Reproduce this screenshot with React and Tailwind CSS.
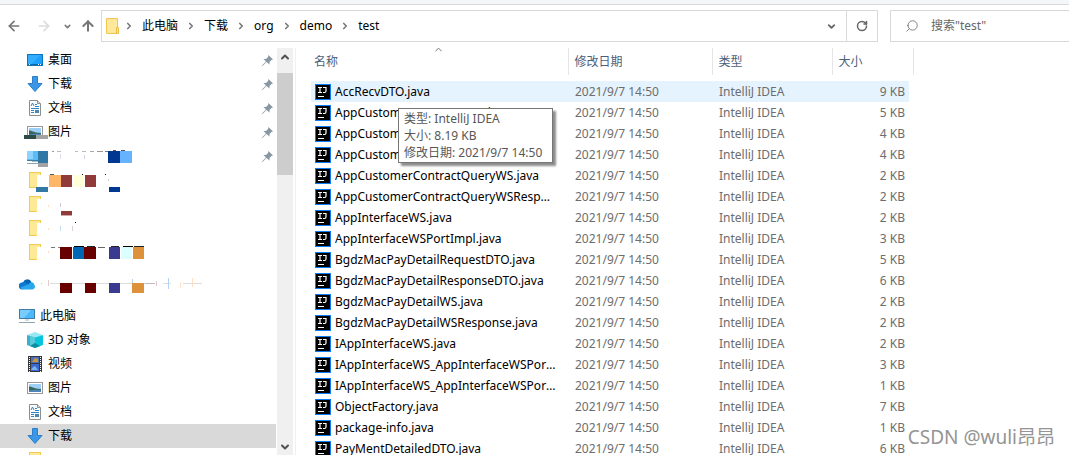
import { ArrowLeft, ArrowRight, ArrowUp, ChevronDown, ChevronRight, ChevronUp, RotateCw, Search } from 'lucide-react';

const files = [
  ['AccRecvDTO.java', '9 KB'],
  ['AppCustomerContractDTO.java', '5 KB'],
  ['AppCustomerContractQueryRequestDTO.java', '4 KB'],
  ['AppCustomerContractQueryResponseDTO.java', '4 KB'],
  ['AppCustomerContractQueryWS.java', '2 KB'],
  ['AppCustomerContractQueryWSResponse.java', '2 KB'],
  ['AppInterfaceWS.java', '2 KB'],
  ['AppInterfaceWSPortImpl.java', '3 KB'],
  ['BgdzMacPayDetailRequestDTO.java', '5 KB'],
  ['BgdzMacPayDetailResponseDTO.java', '6 KB'],
  ['BgdzMacPayDetailWS.java', '2 KB'],
  ['BgdzMacPayDetailWSResponse.java', '2 KB'],
  ['IAppInterfaceWS.java', '2 KB'],
  ['IAppInterfaceWS_AppInterfaceWSPort_Client.java', '3 KB'],
  ['IAppInterfaceWS_AppInterfaceWSPort_Server.java', '1 KB'],
  ['ObjectFactory.java', '7 KB'],
  ['package-info.java', '1 KB'],
  ['PayMentDetailedDTO.java', '6 KB'],
];

const crumbs = ['此电脑', '下载', 'org', 'demo', 'test'];

function Svg({ children }) {
  return (
    <svg className="size-4 shrink-0" viewBox="0 0 16 16" aria-hidden="true">
      {children}
    </svg>
  );
}

function DesktopIcon() {
  return (
    <Svg>
      <rect x="0.5" y="2.5" width="15" height="11" fill="#1ba1fb" stroke="#0b75bd" />
      <path d="M1 3h12L4 13H1z" fill="#35adff" />
      <path d="M1 12.5h14" stroke="#0b67a8" />
      <path d="M2 12.5h1M11 12.5h1M13 12.5h1" stroke="#fff" />
    </Svg>
  );
}

function DownloadIcon() {
  return (
    <Svg>
      <path d="M5.500.5h5v7h4.500L8 15.500 1 7.500h4.500z" fill="#3a96e6" stroke="#2b7fc9" />
    </Svg>
  );
}

function DocumentIcon() {
  return (
    <Svg>
      <path d="M2.500.5h8l3 3v12h-11z" fill="#fbfbfb" stroke="#8b8f92" />
      <path d="M10.500.5v3h3" fill="#ddd" stroke="#8b8f92" />
      <path d="M4 6l1.500-3L7 6M8 4.500h2M8 6.500h4M4 8.500h8M4 10.500h3M4 12.500h3" fill="none" stroke="#2f86c8" />
      <path d="M8 10h4v3H8z" fill="#4b89a5" />
    </Svg>
  );
}

function PictureIcon() {
  return (
    <Svg>
      <rect x="0.5" y="2.5" width="15" height="11" fill="#fff" stroke="#96999b" />
      <path d="M2 4h12v8H2z" fill="#9ed0f7" />
      <path d="M2 6.500c3 0 4 2 12 2.500V12H2z" fill="#37665c" />
      <path d="M2 10.500c4-1 8-1 12-.5v2H2z" fill="#4d87b8" />
    </Svg>
  );
}

function ComputerIcon() {
  return (
    <Svg>
      <rect x="0.5" y="1.500" width="15" height="9" fill="#4db8fa" stroke="#3d7ea8" />
      <path d="M1 2h11l-7 8H1z" fill="#7accff" />
      <path d="M6 12h4" stroke="#a9bac5" />
      <path d="M0 14.500h16" stroke="#8fa5b2" />
    </Svg>
  );
}

function CubeIcon() {
  return (
    <Svg>
      <path d="M0 3l8-3 8 3-8 3z" fill="#9be8f2" />
      <path d="M0 3l8 2.500V16l-8-3z" fill="#35b2c9" />
      <path d="M16 3L8 5.500V16l8-3z" fill="#08c5dd" />
      <path d="M3 4l5 1.500V11l-5 3z" fill="#5ac9d9" />
      <path d="M3 14l5-3 5 3-5 2z" fill="#0f8da0" />
    </Svg>
  );
}

function VideoIcon() {
  return (
    <Svg>
      <path d="M1 0h14v16H1z" fill="#35383c" />
      <path d="M4 1h8v6H4z" fill="#4f6fc0" />
      <path d="M4 8h8v7H4z" fill="#3a67d0" />
      <path d="M5 6l3-4 3 1v3z" fill="#c99a2e" />
      <path d="M5 12l3-2 3 4H4z" fill="#7db0ee" />
      <path d="M2.500 1v15M13.500 1v15" stroke="#fff" strokeDasharray="1 1" />
    </Svg>
  );
}

function CloudIcon() {
  return (
    <Svg>
      <path d="M4 7a4.500 4.500 0 018.500-1L10 10z" fill="#0364b8" />
      <path d="M3.500 13.500A3.500 3.500 0 013 6.500c2-1 4 0 5 1l3 3z" fill="#0f78d4" />
      <path d="M10 8c1-2.500 5-2 5 .5 1.500.8 1.500 4.500-1.500 5h-9c-2 0-3-1-3-2z" fill="#28a8ea" />
    </Svg>
  );
}

function IdeaIcon() {
  return (
    <Svg>
      <rect x="0.5" y="0.5" width="15" height="15" fill="#000" stroke="#0b7cf5" />
      <path d="M3 3.500h4M5 3v6M3 8.500h4M8 3.500h3V7q0 1.500-1.500 1.500H8" fill="none" stroke="#fff" strokeWidth="1.2" />
      <path d="M3 12.500h6" stroke="#fff" />
    </Svg>
  );
}

function PinIcon() {
  return (
    <svg className="size-[11px] shrink-0" viewBox="0 0 11 11" aria-hidden="true">
      <path d="M6.500 0L11 4.500 9.500 5 7.500 7v2.500L4.500 7 .5 11 0 10.500l4-4L1.500 4H4l2-2z" fill="#8a96a0" />
    </svg>
  );
}

// Hidden entries: each block is [x, y, width, height, colour] inside a 24px row
const folder = [
  [29, 4, 12, 16, '#efcb55'],
  [30, 5, 10, 14, '#ffe896'],
  [37, 7, 6, 13, '#ffffff'],
];

const hidden = {
  network: [
    [27, 7, 11, 9, '#5bbcf5'], [27, 7, 6, 8, '#8fd4ff'], [27, 16, 11, 1, '#3d7ea8'], [32, 17, 6, 1, '#a9bac5'], [27, 19, 11, 1, '#8fa5b2'],
    [38, 7, 10, 12, '#3178a4'], [38, 19, 10, 4, '#a3a3a3'],
    [52, 7, 2, 1, '#999'], [57, 7, 4, 1, '#bbb'], [75, 7, 3, 1, '#bbb'], [82, 7, 4, 1, '#bbb'], [90, 7, 4, 1, '#aaa'], [97, 7, 6, 1, '#999'], [105, 7, 4, 1, '#777'],
    [60, 10, 1, 5, '#e3dcee'], [84, 11, 1, 4, '#d5d2ec'],
    [108, 7, 12, 12, '#003891'], [120, 7, 12, 12, '#65b3ff'], [113, 6, 3, 1, '#555'], [121, 6, 4, 1, '#555'],
  ],
  first: [
    ...folder,
    [36, 19, 12, 5, '#3178a4'], [49, 7, 12, 12, '#ffb669'], [61, 7, 11, 12, '#913a3a'], [73, 7, 11, 12, '#ffffda'], [85, 7, 11, 12, '#913a3a'],
    [50, 6, 4, 1, '#555'], [82, 6, 1, 1, '#203'], [105, 6, 1, 1, '#203'], [108, 11, 1, 2, '#ccc'], [109, 19, 11, 5, '#003891'],
  ],
  second: [...folder, [48, 13, 1, 2, '#ffdcc0'], [60, 11, 1, 4, '#c9c9d5'], [61, 19, 11, 5, '#913a3a'], [61, 23, 11, 1, '#d0a8a8']],
  third: [...folder, [48, 12, 1, 2, '#ffdcc0'], [75, 6, 1, 1, '#000'], [60, 10, 1, 5, '#c7dcf5'], [72, 10, 1, 5, '#ddd0dd']],
  fourth: [
    ...folder,
    [48, 11, 1, 2, '#ffdcc0'], [51, 7, 4, 1, '#777'], [58, 7, 7, 1, '#888'], [74, 6, 10, 1, '#000'], [87, 6, 8, 1, '#222'], [98, 7, 7, 1, '#666'], [111, 6, 8, 1, '#222'], [123, 6, 10, 1, '#000'], [134, 6, 10, 1, '#222'],
    [60, 7, 12, 12, '#690000'], [73, 7, 11, 12, '#0067b6'], [84, 7, 12, 12, '#690000'], [109, 7, 11, 12, '#3a3a91'], [121, 7, 11, 12, '#dbffff'], [133, 7, 11, 12, '#dc913a'],
  ],
  cloud: [
    [41, 11, 1, 1, '#ccc'], [48, 8, 1, 6, '#e5ccd0'], [50, 11, 95, 1, '#ddd'], [145, 11, 10, 1, '#bbb'], [156, 9, 1, 5, '#e3c8d4'], [163, 11, 8, 1, '#ddd'], [168, 6, 1, 11, '#b6d2f0'], [180, 10, 1, 6, '#ffe2c8'], [183, 11, 19, 1, '#ddd'], [192, 6, 1, 9, '#ffdfc4'],
    [132, 7, 1, 5, '#b6d2f0'],
    [60, 11, 12, 10, '#690000'], [85, 11, 11, 10, '#690000'], [109, 11, 11, 10, '#3a3a91'], [132, 11, 12, 10, '#dc913a'],
  ],
};

function Blocks({ blocks }) {
  return (
    <svg className="h-6 w-52 shrink-0" viewBox="0 0 208 24" shapeRendering="crispEdges" aria-hidden="true">
      {blocks.map(([x, y, width, height, fill], i) => (
        <rect key={i} x={x} y={y} width={width} height={height} fill={fill} />
      ))}
    </svg>
  );
}

function NavItem({ icon, label, pinned, root, active }) {
  return (
    <li>
      <a
        href="#"
        className={`flex h-6 items-center gap-[5px] pr-[3px] ${root ? 'pl-[19px]' : 'pl-[27px]'} ${active ? 'bg-[#d9d9d9]' : ''}`}
      >
        {icon}
        <span className="grow">{label}</span>
        {pinned && <PinIcon />}
      </a>
    </li>
  );
}

function Sidebar() {
  return (
    <nav className="w-[276px] shrink-0 overflow-hidden">
      <ul>
        <NavItem icon={<DesktopIcon />} label="桌面" pinned />
        <NavItem icon={<DownloadIcon />} label="下载" pinned />
        <NavItem icon={<DocumentIcon />} label="文档" pinned />
        <li className="relative">
          <a href="#" className="flex h-6 items-center gap-[5px] pr-[3px] pl-[27px]">
            <PictureIcon />
            <span className="grow">图片</span>
            <PinIcon />
          </a>
          <span className="absolute top-[15px] left-6 flex h-6">
            <span className="h-1 w-3 bg-[#2f4b48]" />
            <span className="h-1 w-3 bg-[#a3a3a3]" />
          </span>
        </li>
        <li className="flex h-6 items-center justify-between pr-[3px]">
          <Blocks blocks={hidden.network} />
          <PinIcon />
        </li>
        <li className="flex h-6"><Blocks blocks={hidden.first} /></li>
        <li className="flex h-6"><Blocks blocks={hidden.second} /></li>
        <li className="flex h-6"><Blocks blocks={hidden.third} /></li>
        <li className="flex h-6"><Blocks blocks={hidden.fourth} /></li>
      </ul>
      <div className="relative mt-2 h-6">
        <Blocks blocks={hidden.cloud} />
        <span className="absolute top-1 left-[19px]"><CloudIcon /></span>
      </div>
      <ul className="mt-2">
        <NavItem icon={<ComputerIcon />} label="此电脑" root />
        <NavItem icon={<CubeIcon />} label="3D 对象" />
        <NavItem icon={<VideoIcon />} label="视频" />
        <NavItem icon={<PictureIcon />} label="图片" />
        <NavItem icon={<DocumentIcon />} label="文档" />
        <NavItem icon={<DownloadIcon />} label="下载" active />
        <li className="flex h-6"><Blocks blocks={folder} /></li>
      </ul>
    </nav>
  );
}

function Scrollbar() {
  return (
    <div className="ml-px flex w-4 shrink-0 flex-col bg-[#f0f0f0] text-[#505050]">
      <button aria-label="Scroll up" className="flex h-[25px] items-center justify-center pb-2">
        <ChevronUp size={12} strokeWidth={4} />
      </button>
      <div className="h-[102px] bg-[#cdcdcd]" />
      <button aria-label="Scroll down" className="mt-auto flex h-[17px] items-center justify-center">
        <ChevronDown size={12} strokeWidth={4} />
      </button>
    </div>
  );
}

function Toolbar() {
  return (
    <header className="flex h-[43px] shrink-0 items-start pt-[5px] text-[#757575]">
      <div className="flex h-8 w-[101px] shrink-0 items-center">
        <button aria-label="Back" className="ml-[6px]"><ArrowLeft size={16} strokeWidth={2.5} /></button>
        <button aria-label="Forward" disabled className="ml-[14px] text-[#dcdcdc]"><ArrowRight size={16} strokeWidth={2.5} /></button>
        <button aria-label="Recent" className="ml-[11px]"><ChevronDown size={9} strokeWidth={4} /></button>
        <button aria-label="Up" className="ml-[8px]"><ArrowUp size={16} strokeWidth={3} /></button>
      </div>
      <div className="flex h-8 min-w-0 grow items-center border border-[#d9d9d9] text-black">
        <svg className="ml-1 h-4 w-[14px]" viewBox="0 0 14 16" aria-hidden="true">
          <path d="M.5.5h11v15H.5z" fill="#ffe79b" stroke="#efc64f" />
          <path d="M10.500 9.500h2v6h-2z" fill="#ffe79b" stroke="#e8bd48" />
        </svg>
        {crumbs.map((crumb) => (
          <span key={crumb} className="flex items-center">
            <ChevronRight size={10} strokeWidth={4} className="mx-1 text-[#777]" />
            <a href="#" className="px-1">{crumb}</a>
          </span>
        ))}
        <button aria-label="History" className="ml-auto flex h-full w-[30px] items-center justify-center text-[#666]">
          <ChevronDown size={11} strokeWidth={4} />
        </button>
        <button aria-label="Refresh" className="flex h-full w-[31px] items-center justify-center border-l border-[#d9d9d9] text-[#666]">
          <RotateCw size={12} strokeWidth={3} />
        </button>
      </div>
      <label className="ml-3 flex h-8 w-[179px] shrink-0 items-center border border-r-0 border-[#d9d9d9] pl-[14px]">
        <Search size={14} strokeWidth={1.5} className="shrink-0 -scale-x-100" />
        <input
          aria-label="搜索"
          placeholder={'搜索"test"'}
          className="ml-3 w-full min-w-0 outline-none placeholder:text-[#666]"
        />
      </label>
    </header>
  );
}

function FileTable() {
  return (
    <main className="relative min-w-0 grow overflow-hidden pl-[15px]">
      <table className="w-[602px] table-fixed border-collapse text-left text-[#6d6d6d]">
        <colgroup>
          <col className="w-[257px]" />
          <col className="w-36" />
          <col className="w-[120px]" />
          <col className="w-[77px]" />
          <col className="w-1" />
        </colgroup>
        <thead>
          <tr className="h-[27px] text-[#4c607a]">
            <th className="border-r border-[#e5e5e5] p-0 pl-[3px] font-normal">名称</th>
            <th className="border-r border-[#e5e5e5] p-0 pl-[6px] font-normal">修改日期</th>
            <th className="border-r border-[#e5e5e5] p-0 pl-[6px] font-normal">类型</th>
            <th colSpan={2} className="border-r border-[#e5e5e5] p-0 pl-[6px] font-normal">大小</th>
          </tr>
        </thead>
        <tbody className="before:block before:h-[6px]">
          {files.map(([name, size], i) => (
            <tr key={name} className={`h-[21px] ${i === 0 ? '*:bg-[#e5f3ff]' : ''}`}>
              <td className="p-0 pr-3 pl-1">
                <div className="flex items-center gap-1 text-black">
                  <IdeaIcon />
                  <span className="truncate">{name}</span>
                </div>
              </td>
              <td className="p-0 pl-[7px]">2021/9/7 14:50</td>
              <td className="p-0 pl-[7px]">IntelliJ IDEA</td>
              <td className="p-0 pr-1 text-right">{size}</td>
            </tr>
          ))}
        </tbody>
      </table>
      <ChevronUp size={11} strokeWidth={2} className="absolute -top-1 left-[137px] text-[#666]" />
      <div
        role="tooltip"
        className="absolute top-[60px] left-[102px] min-w-[155px] border border-[#767676] bg-white px-[5px] py-px leading-[17px] text-[#575757] shadow-[3px_3px_2px_rgba(0,0,0,0.45)]"
      >
        <p>类型: IntelliJ IDEA</p>
        <p>大小: 8.19 KB</p>
        <p>修改日期: 2021/9/7 14:50</p>
      </div>
    </main>
  );
}

export default function App() {
  return (
    <div className="relative flex h-screen flex-col overflow-hidden bg-white font-['Noto_Sans','Noto_Sans_CJK_SC',sans-serif] text-xs leading-4 text-black">
      <div className="h-[5px] shrink-0 border-b border-[#d9d9d9] bg-[#f5f6f7]" />
      <Toolbar />
      <div className="flex min-h-0 grow">
        <Sidebar />
        <Scrollbar />
        <div className="ml-[2px] w-px shrink-0 bg-[#f0f0f0]" />
        <FileTable />
      </div>
      <div className="absolute right-[14px] bottom-[6px] text-[19px] leading-6 text-[#949494]">CSDN @wuli昂昂</div>
    </div>
  );
}
